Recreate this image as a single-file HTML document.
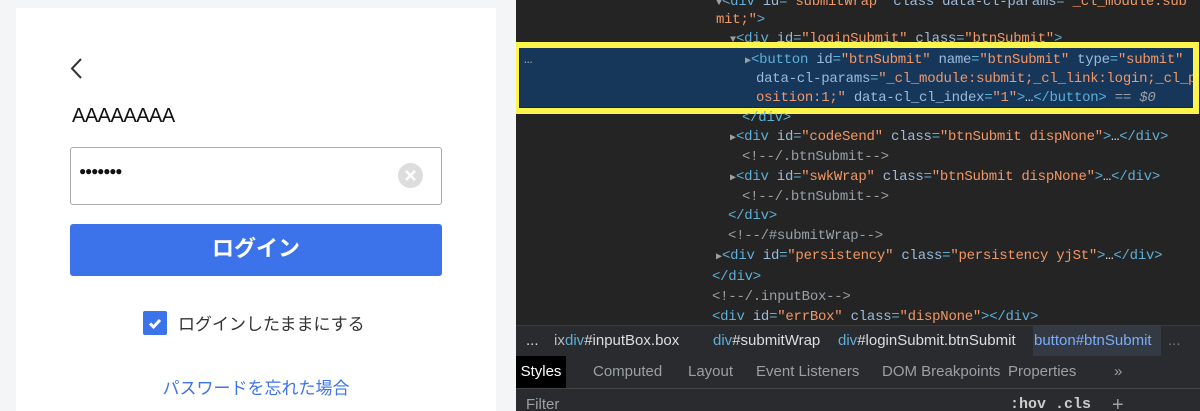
<!DOCTYPE html>
<html><head><meta charset="utf-8"><style>
body{margin:0;width:1200px;height:411px;overflow:hidden;position:relative;background:#f4f5f7;font-family:"Liberation Sans","Noto Sans CJK JP",sans-serif}
.card{position:absolute;left:16px;top:8px;width:480px;height:403px;background:#fff}
.dt{position:absolute;left:516px;top:0;width:684px;height:411px;background:#242424;overflow:hidden}
.l{position:absolute;font-family:"Liberation Mono","DejaVu Sans Mono",monospace;font-size:14px;white-space:pre;color:#9aa0a6;line-height:16px;letter-spacing:-0.25px}
.t{color:#5db0d7}.a{color:#9bbbdc}.v{color:#f29766}.c{color:#9aa0a6}
.tri{color:#9aa0a6;font-size:10px;letter-spacing:0}
</style></head><body>
<div class="card">
<svg style="position:absolute;left:52px;top:49px" width="16" height="26"><path d="M13 2 L4 11.5 L13 21" fill="none" stroke="#333" stroke-width="2"/></svg>
<div style="position:absolute;left:56px;top:97px;font-size:20px;color:#111;letter-spacing:-0.5px">AAAAAAAA</div>
<div style="position:absolute;left:54px;top:139px;width:370px;height:56px;border:1px solid #aaa;border-radius:3px"></div>
<div style="position:absolute;left:63px;top:156px;font-size:12px;letter-spacing:-1.2px;color:#111">●●●●●●●</div>
<div style="position:absolute;left:382px;top:155px;width:25px;height:25px;border-radius:50%;background:#ddd"></div>
<svg style="position:absolute;left:382px;top:155px" width="25" height="25"><path d="M8 8L17 17M17 8L8 17" stroke="#fff" stroke-width="2.5"/></svg>
<div style="position:absolute;left:54px;top:216px;width:372px;height:52px;background:#3c73ea;border-radius:3px;color:#fff;font-size:22px;font-weight:bold;text-align:center;line-height:50px">ログイン</div>
<div style="position:absolute;left:127px;top:303px;width:24px;height:24px;background:#3c73ea;border-radius:2px"></div>
<svg style="position:absolute;left:127px;top:303px" width="24" height="24"><path d="M7 12.5L10.5 16L17 9" fill="none" stroke="#fff" stroke-width="3"/></svg>
<div style="position:absolute;left:162px;top:302px;font-size:17px;color:#333">ログインしたままにする</div>
<div style="position:absolute;left:0;width:480px;text-align:center;top:366px;font-size:17px;color:#3c73ea">パスワードを忘れた場合</div>
</div>
<div class="dt">
<div style="position:absolute;left:4px;top:47px;width:674px;height:60px;background:#17375a"></div>
<div class="l" style="left:200px;top:-6px"><span class="tri">▼</span><span class="t">&lt;div</span> <span class="a">id</span><span class="t">=</span><span class="v">"submitWrap"</span> <span class="a">class data-cl-params</span><span class="t">=</span><span class="v">"_cl_module:sub</span></div>
<div class="l" style="left:200px;top:12px"><span class="v">mit;"</span><span class="t">&gt;</span></div>
<div class="l" style="left:214px;top:31px"><span class="tri">▼</span><span class="t">&lt;div</span> <span class="a">id</span><span class="t">=</span><span class="v">"loginSubmit"</span> <span class="a">class</span><span class="t">=</span><span class="v">"btnSubmit"</span><span class="t">&gt;</span></div>
<div class="l" style="left:8px;top:52px">…</div>
<div class="l" style="left:229px;top:52px"><span class="tri">▶</span><span class="t">&lt;button</span> <span class="a">id</span><span class="t">=</span><span class="v">"btnSubmit"</span> <span class="a">name</span><span class="t">=</span><span class="v">"btnSubmit"</span> <span class="a">type</span><span class="t">=</span><span class="v">"submit"</span></div>
<div class="l" style="left:240px;top:71px"><span class="a">data-cl-params</span><span class="t">=</span><span class="v">"_cl_module:submit;_cl_link:login;_cl_p</span></div>
<div class="l" style="left:240px;top:90px"><span class="v">osition:1;"</span> <span class="a">data-cl_cl_index</span><span class="t">=</span><span class="v">"1"</span><span class="t">&gt;</span><span style="color:#ddd">…</span><span class="t">&lt;/button&gt;</span> <span class="c">== <i>$0</i></span></div>
<div style="position:absolute;left:-3px;top:42px;width:674px;height:60px;border:6px solid #fdf54b"></div>
<div class="l" style="left:226px;top:110px"><span class="t">&lt;/div&gt;</span></div>
<div class="l" style="left:214px;top:129px"><span class="tri">▶</span><span class="t">&lt;div</span> <span class="a">id</span><span class="t">=</span><span class="v">"codeSend"</span> <span class="a">class</span><span class="t">=</span><span class="v">"btnSubmit dispNone"</span><span class="t">&gt;</span><span style="color:#ddd">…</span><span class="t">&lt;/div&gt;</span></div>
<div class="l c" style="left:226px;top:149px">&lt;!--/.btnSubmit--&gt;</div>
<div class="l" style="left:214px;top:169px"><span class="tri">▶</span><span class="t">&lt;div</span> <span class="a">id</span><span class="t">=</span><span class="v">"swkWrap"</span> <span class="a">class</span><span class="t">=</span><span class="v">"btnSubmit dispNone"</span><span class="t">&gt;</span><span style="color:#ddd">…</span><span class="t">&lt;/div&gt;</span></div>
<div class="l c" style="left:226px;top:189px">&lt;!--/.btnSubmit--&gt;</div>
<div class="l" style="left:212px;top:208px"><span class="t">&lt;/div&gt;</span></div>
<div class="l c" style="left:212px;top:228px">&lt;!--/#submitWrap--&gt;</div>
<div class="l" style="left:200px;top:248px"><span class="tri">▶</span><span class="t">&lt;div</span> <span class="a">id</span><span class="t">=</span><span class="v">"persistency"</span> <span class="a">class</span><span class="t">=</span><span class="v">"persistency yjSt"</span><span class="t">&gt;</span><span style="color:#ddd">…</span><span class="t">&lt;/div&gt;</span></div>
<div class="l" style="left:196px;top:269px"><span class="t">&lt;/div&gt;</span></div>
<div class="l c" style="left:196px;top:289px">&lt;!--/.inputBox--&gt;</div>
<div class="l" style="left:196px;top:309px"><span class="t">&lt;div</span> <span class="a">id</span><span class="t">=</span><span class="v">"errBox"</span> <span class="a">class</span><span class="t">=</span><span class="v">"dispNone"</span><span class="t">&gt;&lt;/div&gt;</span></div>
<div style="position:absolute;left:0;top:325px;width:684px;height:30px;background:#2a2b2e;border-top:1px solid #3c3c3c;border-bottom:1px solid #3c3c3c;font-size:15px;line-height:30px;white-space:nowrap;color:#ddd">
<span style="position:absolute;left:10px">...</span><span style="position:absolute;left:38px;color:#bbb">ix</span>
<span style="position:absolute;left:49px"><span class="t">div</span>#inputBox.box</span>
<span style="position:absolute;left:197px"><span class="t">div</span>#submitWrap</span>
<span style="position:absolute;left:322px"><span class="t">div</span>#loginSubmit.btnSubmit</span>
<span style="position:absolute;left:517px;width:128px;height:30px;background:#343a44"></span>
<span style="position:absolute;left:518px;color:#7cacf8">button#btnSubmit</span>
<span style="position:absolute;left:652px;color:#777">...</span></div>
<div style="position:absolute;left:0;top:356px;width:684px;height:32px;background:#2a2b2e;border-bottom:1px solid #444;font-size:15px;line-height:32px;color:#9aa0a6;white-space:nowrap">
<span style="position:absolute;left:0;width:50px;height:32px;background:#000;color:#fff;text-align:center">Styles</span>
<span style="position:absolute;left:77px">Computed</span><span style="position:absolute;left:172px">Layout</span><span style="position:absolute;left:240px">Event Listeners</span><span style="position:absolute;left:366px">DOM Breakpoints</span><span style="position:absolute;left:492px">Properties</span><span style="position:absolute;left:598px">»</span></div>
<div style="position:absolute;left:0;top:389px;width:684px;height:22px;background:#2a2b2e;font-size:15px;line-height:32px;color:#9aa0a6;white-space:nowrap">
<span style="position:absolute;left:10px">Filter</span><span style="position:absolute;left:494px;font-family:'Liberation Mono',monospace;font-weight:bold;color:#ccc">:hov .cls</span><span style="position:absolute;left:596px;font-size:20px">+</span></div>
</div>
</body></html>
